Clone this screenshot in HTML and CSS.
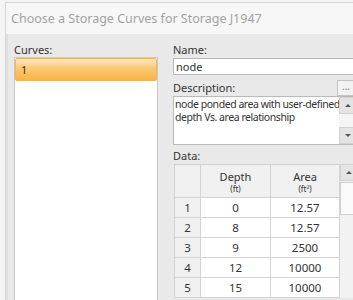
FILE: index.html
```html
<!DOCTYPE html>
<html>
    <head>
        <meta charset="utf-8">
        <title>Choose a Storage Curves for Storage J1947</title>
        <link rel="stylesheet" href="styles.css">
    </head>
    <body>
        <div class="window">
            <div class="titlebar">Choose a Storage Curves for Storage J1947</div>
            <div class="dialog">
                <div class="left">
                    <div class="label">Curves:</div>
                    <div class="listbox">
                        <div class="item selected">1</div>
                    </div>
                </div>
                <div class="right">
                    <div class="label">Name:</div>
                    <div class="textbox">node</div>
                    <div class="desc-row">
                        <div class="label">Description:</div>
                        <div class="dots">...</div>
                    </div>
                    <div class="textarea">
                        <div class="text">node ponded area with user-defined<br>depth Vs. area relationship</div>
                        <div class="vscroll">
                            <div class="arrow up"></div>
                            <div class="track"></div>
                            <div class="arrow down"></div>
                        </div>
                    </div>
                    <div class="label data-label">Data:</div>
                    <div class="grid-wrap">
                        <table class="grid">
                            <tr class="head">
                                <th class="rowhead"></th>
                                <th><span class="top">Depth</span><span class="unit">(ft)</span></th>
                                <th><span class="top">Area</span><span class="unit">(ft&sup2;)</span></th>
                            </tr>
                            <tr><td class="rowhead">1</td><td>0</td><td>12.57</td></tr>
                            <tr><td class="rowhead">2</td><td>8</td><td>12.57</td></tr>
                            <tr><td class="rowhead">3</td><td>9</td><td>2500</td></tr>
                            <tr><td class="rowhead">4</td><td>12</td><td>10000</td></tr>
                            <tr><td class="rowhead">5</td><td>15</td><td>10000</td></tr>
                        </table>
                        <div class="gscroll">
                            <div class="arrow up"></div>
                            <div class="thumb"></div>
                        </div>
                    </div>
                </div>
            </div>
        </div>
    </body>
</html>
```

FILE: styles.css
```css
html, body {
    margin: 0;
    height: 100%;
    overflow: hidden;
}
body {
    background: #f4f4f4;
    font-family: "Noto Sans", "Open Sans", sans-serif;
    font-size: 11px;
    color: #333;
}
.window {
    margin: 2px 0 0 5px;
    height: 100%;
    border-left: 1px solid #d6d6d6;
    border-top: 1px solid #d6d6d6;
}
.titlebar {
    height: 31px;
    line-height: 31px;
    padding-left: 5px;
    background: #f7f7f7;
    color: #a2a2a2;
    font-size: 12.5px;
}
.dialog {
    display: flex;
    gap: 15px;
    height: 100%;
    padding: 9px 0 0 6px;
    background: #e9e9e9;
    border-left: 2px solid #e0e0e0;
}
.left {
    width: 144px;
    flex: none;
    display: flex;
    flex-direction: column;
}
.label {
    height: 14px;
    line-height: 14px;
    color: #333;
}
.listbox {
    flex: 1;
    background: #fff;
    border: 1px solid #c9c9c9;
}
.item {
    height: 21px;
    line-height: 21px;
    padding-left: 5px;
}
.item.selected {
    background: linear-gradient(#fde9c2, #fbc873 45%, #f9b445);
    border: 1px solid #f2b45a;
    border-radius: 2px;
}
.right {
    width: 183px;
    flex: none;
}
.textbox {
    margin-top: 1px;
    height: 15px;
    line-height: 15px;
    padding: 0 2px;
    background: #fff;
    border: 1px solid #b9b9b9;
}
.desc-row {
    display: flex;
    justify-content: space-between;
    align-items: center;
    height: 16px;
    margin-top: 5px;
}
.dots {
    width: 16px;
    height: 14px;
    margin-right: 1px;
    border: 1px solid #c4c4c4;
    background: #f2f2f2;
    color: #888;
    text-align: center;
    line-height: 10px;
    font-size: 10px;
}
.textarea {
    display: flex;
    height: 47px;
    background: #fff;
    border: 1px solid #b9b9b9;
}
.text {
    flex: 1;
    padding: 1px 1px;
    line-height: 13px;
    font-size: 10.5px;
    letter-spacing: -0.45px;
    white-space: nowrap;
    overflow: hidden;
}
.vscroll {
    width: 16px;
    flex: none;
    display: flex;
    flex-direction: column;
    background: #f4f4f4;
}
.vscroll .track {
    flex: 1;
}
.arrow {
    height: 15px;
    background: #e4e4e4;
    border: 1px solid #d2d2d2;
    position: relative;
}
.arrow::after {
    content: "";
    position: absolute;
    left: 5px;
    top: 6px;
    border-left: 3px solid transparent;
    border-right: 3px solid transparent;
}
.arrow.up::after {
    border-bottom: 3px solid #555;
}
.arrow.down::after {
    border-top: 3px solid #555;
}
.data-label {
    margin-top: 4px;
}
.grid-wrap {
    display: flex;
    margin-top: 1px;
}
.grid {
    border-collapse: collapse;
    border: 1px solid #b0b0b0;
    margin-left: 1px;
}
.grid th, .grid td {
    border: 1px solid #d3d3d3;
    text-align: center;
    padding: 0;
    font-weight: normal;
}
.grid th {
    height: 32px;
    background: #f0f0f0;
    vertical-align: middle;
}
.grid th .top {
    display: block;
    font-size: 11px;
    line-height: 13px;
}
.grid th .unit {
    display: block;
    margin-top: 1px;
    font-size: 8px;
    line-height: 9px;
}
.grid td {
    height: 19px;
    background: #fff;
    font-size: 11.5px;
}
.grid .rowhead {
    width: 25px;
    background: #f0f0f0;
}
.grid th:nth-child(2), .grid td:nth-child(2) {
    width: 69px;
}
.grid th:nth-child(3), .grid td:nth-child(3) {
    width: 68px;
}
.gscroll {
    width: 16px;
    background: #f2f2f2;
}
.gscroll .thumb {
    height: 31px;
    margin-top: 1px;
    background: #fafafa;
    border: 1px solid #d0d0d0;
}
```
